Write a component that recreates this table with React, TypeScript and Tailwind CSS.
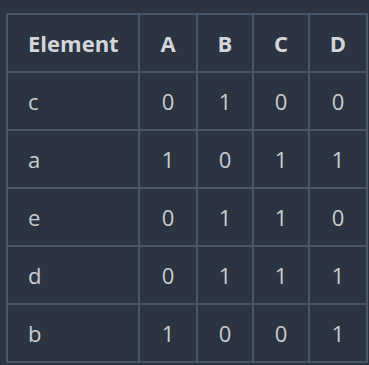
const headers = ['A', 'B', 'C', 'D'];

const rows: [string, number[]][] = [
  ['c', [0, 1, 0, 0]],
  ['a', [1, 0, 1, 1]],
  ['e', [0, 1, 1, 0]],
  ['d', [0, 1, 1, 1]],
  ['b', [1, 0, 0, 1]],
];

export default function App() {
  return (
    <div
      className="w-[369px] h-[365px] bg-[#2b3440] pl-[6px] pt-[13px]"
      style={{ fontFamily: '"Open Sans", "Noto Sans", sans-serif' }}
    >
      <table className="border-collapse table-fixed w-[360px] text-[22px] text-[#c9cdd3]">
        <colgroup>
          <col className="w-[132px]" />
          <col className="w-[58px]" />
          <col className="w-[56px]" />
          <col className="w-[56px]" />
          <col className="w-[58px]" />
        </colgroup>
        <thead>
          <tr className="h-[58px]">
            <th className="border-2 border-[#48566a] text-left pl-[20px] font-bold text-[#d3d6db]">
              Element
            </th>
            {headers.map(h => (
              <th key={h} className="border-2 border-[#48566a] text-center font-bold text-[#d3d6db]">
                {h}
              </th>
            ))}
          </tr>
        </thead>
        <tbody>
          {rows.map(([name, vals]) => (
            <tr key={name} className="h-[58px]">
              <td className="border-2 border-[#48566a] text-left pl-[20px]">{name}</td>
              {vals.map((v, i) => (
                <td key={i} className="border-2 border-[#48566a] text-center">
                  {v}
                </td>
              ))}
            </tr>
          ))}
        </tbody>
      </table>
    </div>
  );
}
